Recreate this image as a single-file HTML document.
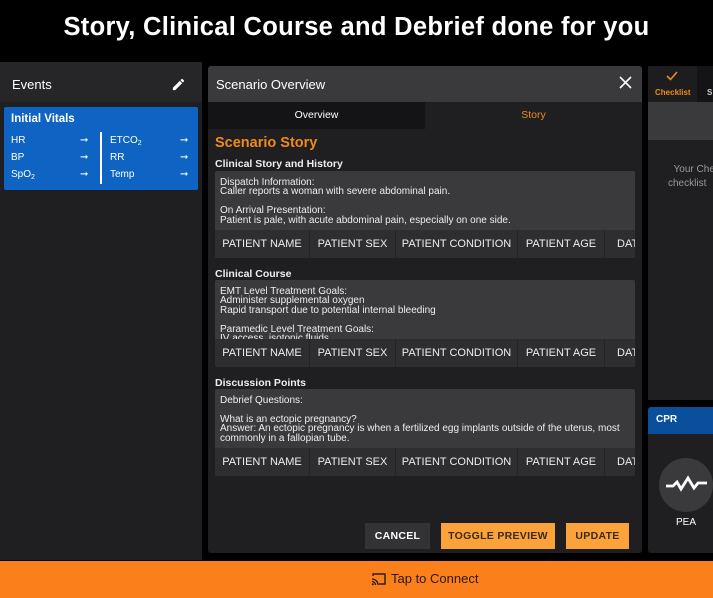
<!DOCTYPE html>
<html><head><style>
*{margin:0;padding:0;box-sizing:border-box}
body{width:713px;height:598px;background:#000;position:relative;overflow:hidden;font-family:"Liberation Sans",sans-serif;color:#fff}
.a{position:absolute}
.title{left:0;top:13px;width:713px;text-align:center;font-size:25.5px;font-weight:bold;letter-spacing:0.3px}
.lbl{font-size:10.5px;font-weight:bold;color:#eee}
.box{left:215px;width:420px;background:#3a3a3c;border-radius:2px;overflow:hidden}
.txt{padding:7px 5px 0 5px;font-size:10px;line-height:9.4px;color:#eee;height:59px;overflow:hidden}
.row{display:flex;height:28px;background:#2e2e30}
.row div{border-right:1px solid #242426;font-size:11px;line-height:28px;text-align:center;color:#eee;flex:none;white-space:nowrap;overflow:hidden}
.btn{top:523px;height:26px;font-size:10.5px;font-weight:bold;text-align:center;line-height:26px;letter-spacing:0.3px}
sub{font-size:7px;line-height:0;vertical-align:-2px}
.v{font-size:10px;line-height:17px}
</style></head><body>
<div class="a title">Story, Clinical Course and Debrief done for you</div>

<div class="a" style="left:0;top:62px;width:202px;height:498px;background:#1f1f21"></div>
<div class="a" style="left:0;top:62px;width:202px;height:40px;background:#262628"></div>
<div class="a" style="left:12px;top:77px;font-size:13px">Events</div>
<svg class="a" style="left:171px;top:77px" width="15" height="15" viewBox="0 0 24 24"><path fill="#fff" d="M3 17.25V21h3.75L17.81 9.94l-3.75-3.75L3 17.25zM20.71 7.04a1 1 0 000-1.41l-2.34-2.34a1 1 0 00-1.41 0l-1.83 1.83 3.75 3.75 1.83-1.83z"/></svg>
<div class="a" style="left:4px;top:107px;width:194px;height:83px;background:#0f64c3;border-radius:2px"></div>
<div class="a" style="left:11px;top:113px;font-size:11.5px;font-weight:bold">Initial Vitals</div>
<div class="a" style="left:100px;top:132px;width:2px;height:52px;background:#fff"></div>
<div class="a v" style="left:11px;top:132px">HR<br>BP<br>SpO<sub>2</sub></div>
<div class="a v" style="left:80px;top:132px">➞<br>➞<br>➞</div>
<div class="a v" style="left:110px;top:132px">ETCO<sub>2</sub><br>RR<br>Temp</div>
<div class="a v" style="left:180px;top:132px">➞<br>➞<br>➞</div>

<div class="a" style="left:208px;top:66px;width:434px;height:487px;background:#1f1f21;border-radius:3px"></div>
<div class="a" style="left:208px;top:66px;width:434px;height:36px;background:#3a3a3c;border-radius:3px 3px 0 0"></div>
<div class="a" style="left:216px;top:77px;font-size:13px">Scenario Overview</div>
<svg class="a" style="left:619px;top:76px" width="13" height="13" viewBox="0 0 13 13"><path d="M1 1L12 12M12 1L1 12" stroke="#fff" stroke-width="1.6"/></svg>
<div class="a" style="left:208px;top:102px;width:217px;height:27px;background:#141416;font-size:10.5px;text-align:center;line-height:27px">Overview</div>
<div class="a" style="left:425px;top:102px;width:217px;height:27px;font-size:10.5px;text-align:center;line-height:27px;color:#f08a1c">Story</div>
<div class="a" style="left:215px;top:135px;font-size:14.5px;font-weight:bold;color:#f08a1c">Scenario Story</div>

<div class="a lbl" style="left:215px;top:158px">Clinical Story and History</div>
<div class="a box" style="top:171px"><div class="txt">Dispatch Information:<br>Caller reports a woman with severe abdominal pain.<br><br>On Arrival Presentation:<br>Patient is pale, with acute abdominal pain, especially on one side.</div>
<div class="row"><div style="width:95px">PATIENT NAME</div><div style="width:86px">PATIENT SEX</div><div style="width:122px">PATIENT CONDITION</div><div style="width:87px">PATIENT AGE</div><div style="width:40px;text-align:left;padding-left:12px">DATE</div></div></div>

<div class="a lbl" style="left:215px;top:268px">Clinical Course</div>
<div class="a box" style="top:280px"><div class="txt">EMT Level Treatment Goals:<br>Administer supplemental oxygen<br>Rapid transport due to potential internal bleeding<br><br>Paramedic Level Treatment Goals:<br>IV access, isotonic fluids</div>
<div class="row"><div style="width:95px">PATIENT NAME</div><div style="width:86px">PATIENT SEX</div><div style="width:122px">PATIENT CONDITION</div><div style="width:87px">PATIENT AGE</div><div style="width:40px;text-align:left;padding-left:12px">DATE</div></div></div>

<div class="a lbl" style="left:215px;top:377px">Discussion Points</div>
<div class="a box" style="top:389px"><div class="txt">Debrief Questions:<br><br>What is an ectopic pregnancy?<br>Answer: An ectopic pregnancy is when a fertilized egg implants outside of the uterus, most commonly in a fallopian tube.</div>
<div class="row"><div style="width:95px">PATIENT NAME</div><div style="width:86px">PATIENT SEX</div><div style="width:122px">PATIENT CONDITION</div><div style="width:87px">PATIENT AGE</div><div style="width:40px;text-align:left;padding-left:12px">DATE</div></div></div>

<div class="a btn" style="left:365px;width:65px;background:#333335">CANCEL</div>
<div class="a btn" style="left:441px;width:114px;background:#fba33a;color:#3a2a10">TOGGLE PREVIEW</div>
<div class="a btn" style="left:566px;width:63px;background:#fba33a;color:#3a2a10">UPDATE</div>

<div class="a" style="left:648px;top:66px;width:65px;height:334px;background:#1f1f21;border-radius:3px 0 0 0"></div>
<div class="a" style="left:648px;top:66px;width:65px;height:36px;background:#141416"></div>
<div class="a" style="left:648px;top:66px;width:49px;height:36px;background:#1d1d1f"></div>
<svg class="a" style="left:665px;top:70px" width="14" height="12" viewBox="0 0 14 12"><path d="M2 6L5.5 9.5L12 2" stroke="#f08a1c" stroke-width="1.6" fill="none"/></svg>
<div class="a" style="left:655px;top:88px;font-size:8px;font-weight:bold;color:#f08a1c">Checklist</div>
<div class="a" style="left:707px;top:88px;font-size:8px;font-weight:bold;color:#ccc">S</div>
<div class="a" style="left:648px;top:102px;width:65px;height:38px;background:#3a3a3c"></div>
<div class="a" style="left:668px;top:163px;font-size:10px;color:#999;line-height:14px;white-space:nowrap">&nbsp;&nbsp;Your Che<br>checklist</div>
<div class="a" style="left:648px;top:407px;width:65px;height:146px;background:#1f1f21;border-radius:3px 0 0 3px"></div>
<div class="a" style="left:648px;top:407px;width:65px;height:27px;background:#0a4f9b;border-radius:3px 0 0 0"></div>
<div class="a" style="left:656px;top:414px;font-size:10px;font-weight:bold">CPR</div>
<div class="a" style="left:659px;top:458px;width:54px;height:54px;border-radius:50%;background:#3a3a3c"></div>
<svg class="a" style="left:663px;top:474px" width="48" height="22" viewBox="0 0 48 22"><path d="M3 12H10L14 8L18 15L25 4L31 14L35 9H44" stroke="#fff" stroke-width="2.8" fill="none" stroke-linejoin="miter"/></svg>
<div class="a" style="left:676px;top:517px;font-size:10px">PEA</div>

<div class="a" style="left:0;top:561px;width:713px;height:37px;background:#fb801b"></div>
<svg class="a" style="left:371px;top:572px" width="16" height="14" viewBox="0 0 16 14"><path d="M2 4V2H14V12H8" stroke="#2a1a08" stroke-width="1.4" fill="none"/><path d="M1 7A6 6 0 017 13M1 9.5A3.5 3.5 0 014.5 13" stroke="#2a1a08" stroke-width="1.3" fill="none"/><circle cx="1.8" cy="12.2" r="1" fill="#2a1a08"/></svg>
<div class="a" style="left:391px;top:571px;font-size:13px;color:#2a1a08">Tap to Connect</div>
</body></html>
